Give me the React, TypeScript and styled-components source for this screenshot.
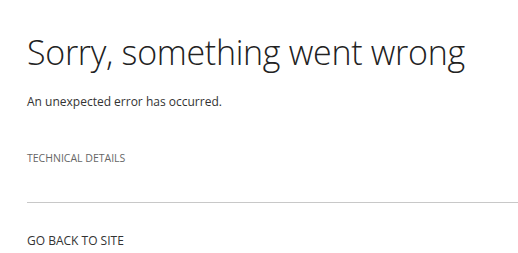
import * as React from 'react';
import styled, { createGlobalStyle } from 'styled-components';

const GlobalStyle = createGlobalStyle`
  html, body {
    margin: 0;
    padding: 0;
    background: #ffffff;
  }
  body {
    font-family: "Open Sans", "Liberation Sans", sans-serif;
    color: #333333;
  }
`;

const Page = styled.div`
  display: flex;
  flex-direction: column;
  padding: 29px 0 0 27px;
`;

const Title = styled.h1`
  margin: 0;
  font-size: 34px;
  line-height: 46px;
  font-weight: 300;
  color: #222222;
  letter-spacing: -0.3px;
`;

const Message = styled.p`
  margin: 18px 0 0;
  font-size: 12px;
  line-height: 18px;
  color: #333333;
`;

const Details = styled.div`
  margin-top: 39px;
  font-size: 10.5px;
  line-height: 16px;
  color: #666666;
  text-transform: uppercase;
`;

const Divider = styled.hr`
  margin: 36px 0 0;
  border: none;
  border-top: 1px solid #c8c8c8;
  height: 0;
`;

const BackLink = styled.a`
  margin-top: 29px;
  font-size: 12px;
  line-height: 18px;
  color: #333333;
  text-decoration: none;
  text-transform: uppercase;
  align-self: flex-start;
`;

export default function App() {
  return (
    <>
      <GlobalStyle />
      <Page>
        <Title>Sorry, something went wrong</Title>
        <Message>An unexpected error has occurred.</Message>
        <Details>Technical Details</Details>
        <Divider />
        <BackLink href="#">Go back to site</BackLink>
      </Page>
    </>
  );
}
